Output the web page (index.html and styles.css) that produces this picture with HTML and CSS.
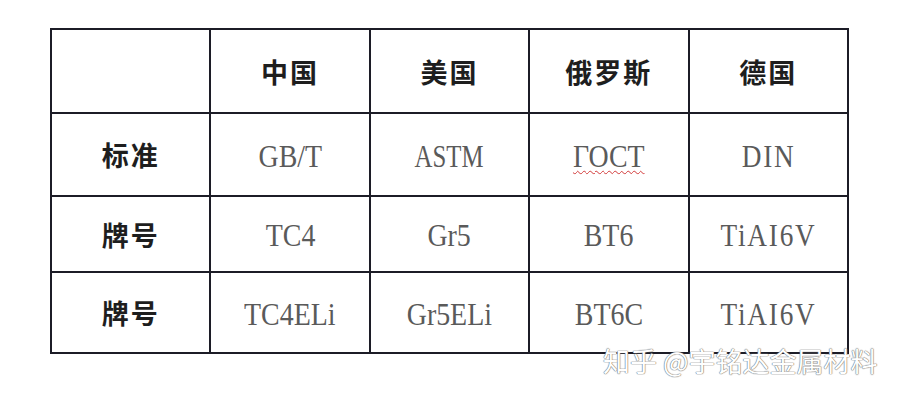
FILE: index.html
```html
<!DOCTYPE html>
<html lang="zh">
<head>
<meta charset="utf-8">
<link rel="stylesheet" href="styles.css">
</head>
<body>
<div class="page">
  <table class="spec">
    <tr class="r-head">
      <th></th>
      <th>中国</th>
      <th>美国</th>
      <th>俄罗斯</th>
      <th>德国</th>
    </tr>
    <tr class="r-std">
      <th class="label">标准</th>
      <td><span class="val">GB/T</span></td>
      <td><span class="val tight">ASTM</span></td>
      <td><span class="val spell">ГОСТ</span></td>
      <td><span class="val wide">DIN</span></td>
    </tr>
    <tr class="r-g1">
      <th class="label">牌号</th>
      <td><span class="val">TC4</span></td>
      <td><span class="val">Gr5</span></td>
      <td><span class="val">BT6</span></td>
      <td><span class="val wide">TiAI6V</span></td>
    </tr>
    <tr class="r-g2">
      <th class="label">牌号</th>
      <td><span class="val">TC4ELi</span></td>
      <td><span class="val">Gr5ELi</span></td>
      <td><span class="val">BT6C</span></td>
      <td><span class="val wide">TiAI6V</span></td>
    </tr>
  </table>
  <div class="watermark">知乎 @宇铭达金属材料</div>
</div>
</body>
</html>
```
FILE: styles.css
```css
html, body {
  margin: 0;
  padding: 0;
  background: #ffffff;
}
.page {
  position: relative;
  width: 900px;
  height: 400px;
  padding: 28px 0 0 50px;
  box-sizing: border-box;
}
.spec {
  border-collapse: collapse;
  table-layout: fixed;
  width: 799px;
}
.spec th, .spec td {
  border: 2px solid #1c1c26;
  text-align: center;
  vertical-align: middle;
  padding: 0;
  width: 20%;
}
.spec th {
  font-family: "Noto Sans CJK SC", "Noto Sans", sans-serif;
  font-weight: 700;
  font-size: 27px;
  color: #1e1e1e;
  letter-spacing: 2px;
}
.spec td {
  font-family: "Liberation Serif", "Times New Roman", serif;
  font-size: 31px;
  color: #5a5a5a;
  padding-top: 4px;
}
.val {
  display: inline-block;
  transform: scaleX(0.9);
}
.val.tight {
  transform: scaleX(0.8);
}
.val.wide {
  letter-spacing: 2px;
  transform: scaleX(0.88);
}
.r-head { height: 84px; }
.r-std { height: 83px; }
.r-g1 { height: 76px; }
.r-g2 { height: 81px; }
.spell {
  text-decoration: underline wavy #d23a3a;
  text-decoration-thickness: 1px;
  text-underline-offset: 3px;
}
.watermark {
  position: absolute;
  left: 603px;
  top: 345px;
  font-family: "Noto Sans CJK SC", "Noto Sans", sans-serif;
  font-size: 27px;
  line-height: 32px;
  color: #ffffff;
  white-space: nowrap;
  text-shadow: 0 0 1px #7a7a7a, 0 0 1px #7a7a7a, 0 0 1px #7a7a7a;
}
```
